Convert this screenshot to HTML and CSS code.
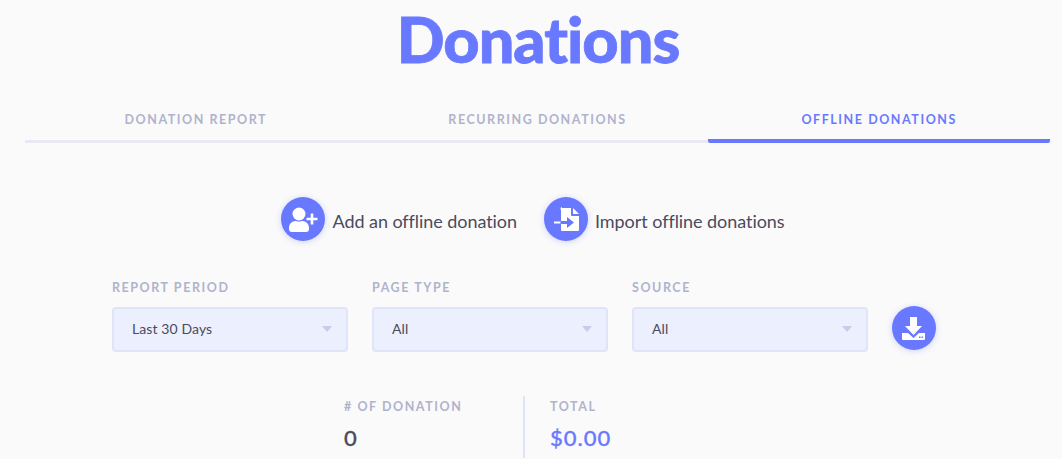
FILE: index.html
```html
<!DOCTYPE html>
<html lang="en">
<head>
    <meta charset="UTF-8">
    <title>Donations</title>
    <link rel="stylesheet" href="styles.css">
</head>
<body>
    <div class="container">
        <!-- Header -->
        <h1>Donations</h1>
        <nav class="tabs">
            <a href="#">Donation Report</a>
            <a href="#">Recurring Donations</a>
            <a href="#" class="active">Offline Donations</a>
        </nav>

        <!-- Actions -->
        <div class="actions">
            <a href="#" class="action">
                <span class="round-button">
                    <svg width="44" height="44" viewBox="0 0 44 44"><circle cx="18" cy="17" r="6.500"/><path d="M11 35a3 3 0 0 1-3-3v-1c0-4 3-7 6.500-7h.5a8 8 0 0 0 6 0h.5c3.500 0 6.500 3 6.500 7v1a3 3 0 0 1-3 3z"/><path d="M29.700 16.500h2.600v4.200h4.200v2.600h-4.200v4.200h-2.600v-4.200h-4.200v-2.600h4.200z"/></svg>
                </span>
                <span class="action-text">Add an offline donation</span>
            </a>
            <a href="#" class="action">
                <span class="round-button">
                    <svg width="44" height="44" viewBox="0 0 44 44"><path d="M18 11h9v7a1 1 0 0 0 1 1h7v14a1 1 0 0 1-1 1H18a1 1 0 0 1-1-1V27h6v4l7-5.500-7-5.500v4h-6v-11a2 2 0 0 1 1-3z"/><path d="M29 11l6 6h-6z"/><path d="M10 24.500h6.500v2H10z"/></svg>
                </span>
                <span class="action-text">Import offline donations</span>
            </a>
        </div>

        <!-- Filters -->
        <div class="filters">
            <div class="filter">
                <label>Report Period</label>
                <div class="select">Last 30 Days</div>
            </div>
            <div class="filter">
                <label>Page Type</label>
                <div class="select">All</div>
            </div>
            <div class="filter">
                <label>Source</label>
                <div class="select">All</div>
            </div>
            <a href="#" class="round-button download">
                <svg width="44" height="44" viewBox="0 0 44 44"><path d="M18 11h7v9h5l-8.500 9-8.500-9h5z"/><path d="M10 27h6l5.500 5 5.500-5h6v6a1 1 0 0 1-1 1H11a1 1 0 0 1-1-1z"/><path class="dots" d="M27 30.500h1.500V32H27zM29.500 30.500H31V32h-1.500z"/></svg>
            </a>
        </div>

        <!-- Totals -->
        <div class="stats">
            <div class="stat count">
                <span class="stat-label"># of Donation</span>
                <span class="stat-value">0</span>
            </div>
            <div class="stat total">
                <span class="stat-label">Total</span>
                <span class="stat-value">$0.00</span>
            </div>
        </div>
    </div>
</body>
</html>
```

FILE: styles.css
```css
html, body {
    height: 459px;
    overflow: hidden;
}

body {
    font-family: 'Lato', sans-serif;
    margin: 0;
    padding: 0;
    background-color: #FAFAFA;
    color: #4A4B5E;
}

.container {
    width: 1062px;
}

a {
    text-decoration: none;
}

/* Header */
h1 {
    font-size: 63px;
    font-weight: 900;
    line-height: 78px;
    letter-spacing: -1px;
    -webkit-text-stroke: 0.8px #6979FF;
    color: #6979FF;
    text-align: center;
    margin: 0 0 0 14px;
}

/* Tabs */
.tabs {
    display: flex;
    margin: 33px 12px 0 25px;
    border-bottom: 3px solid #E8E9F2;
}
.tabs a {
    flex: 1;
    text-align: center;
    font-size: 12.500px;
    font-weight: 700;
    line-height: 18px;
    letter-spacing: 1.550px;
    text-transform: uppercase;
    color: #B0B3CC;
    padding-bottom: 11px;
    margin-bottom: -3px;
}
.tabs a.active {
    color: #6979FF;
    border-bottom: 4px solid #6979FF;
    border-radius: 2px;
    padding-bottom: 10px;
}

/* Round icon button */
.round-button {
    display: flex;
    align-items: center;
    justify-content: center;
    flex: none;
    width: 44px;
    height: 44px;
    border-radius: 50%;
    background-color: #6979FF;
    box-shadow: 0 1px 6px rgba(105, 121, 255, 0.3);
}
.round-button svg {
    fill: #FFFFFF;
}
.round-button .dots {
    fill: #6979FF;
}

/* Actions */
.actions {
    display: flex;
    justify-content: center;
    gap: 27px;
    margin: 54px 0 0 4px;
}
.action {
    display: flex;
    align-items: center;
    gap: 7px;
    font-size: 18px;
    letter-spacing: -0.060px;
    color: #4A4B5E;
}
.action-text {
    padding-top: 3px;
}

/* Filters */
.filters {
    display: flex;
    align-items: flex-end;
    gap: 24px;
    margin: 38px 0 0 112px;
}
.filter {
    width: 236px;
}
.filter label {
    display: block;
    font-size: 12.500px;
    font-weight: 700;
    line-height: 18px;
    letter-spacing: 1.550px;
    text-transform: uppercase;
    color: #B0B3CC;
    margin-bottom: 10px;
}
.select {
    position: relative;
    box-sizing: border-box;
    height: 45px;
    padding: 0 18px;
    line-height: 40px;
    font-size: 14px;
    letter-spacing: 0.1px;
    color: #4A4B5E;
    background-color: #ECEFFD;
    border: 2px solid #DFE4F8;
    border-radius: 4px;
}
.select::after {
    content: "";
    position: absolute;
    right: 14px;
    top: 17px;
    border-left: 5.500px solid transparent;
    border-right: 5.500px solid transparent;
    border-top: 6px solid #C9CCE6;
}
.download {
    margin-bottom: 2px;
}

/* Totals */
.stats {
    display: flex;
    margin: 44px 0 0 344px;
}
.stat {
    display: flex;
    flex-direction: column;
    height: 62px;
}
.stat-label {
    font-size: 12.500px;
    font-weight: 700;
    line-height: 18px;
    letter-spacing: 1.550px;
    text-transform: uppercase;
    color: #B0B3CC;
    margin-top: 2px;
}
.stat-value {
    font-size: 22px;
    font-weight: 500;
    line-height: 26px;
    letter-spacing: 1px;
    -webkit-text-stroke: 0.3px;
    margin-top: 9px;
}
.count {
    width: 179px;
    border-right: 2px solid #DFE4F8;
}
.total {
    padding-left: 25px;
}
.total .stat-value {
    color: #6979FF;
}
```
